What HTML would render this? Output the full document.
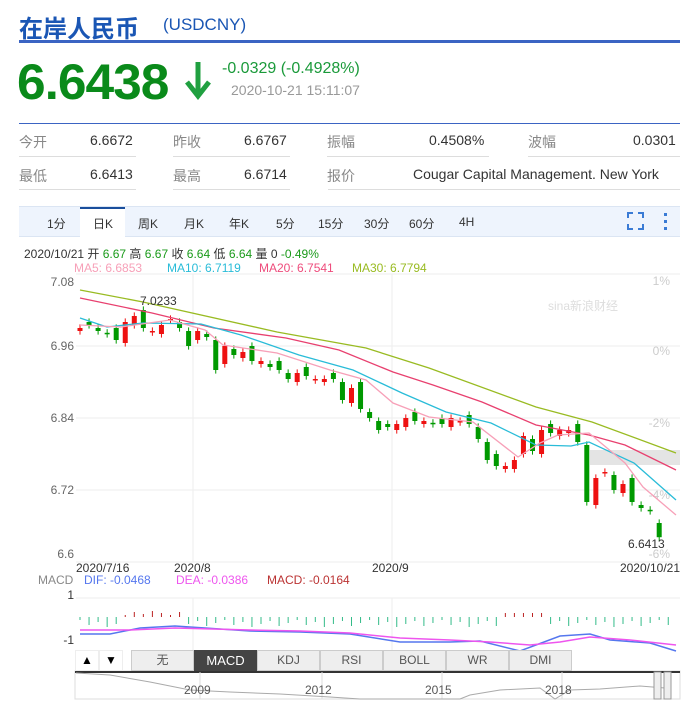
<!DOCTYPE html>
<html><head><meta charset="utf-8">
<style>
*{margin:0;padding:0;box-sizing:border-box}
body{width:689px;height:712px;background:#fff;font-family:"Liberation Sans","Noto Sans CJK SC",sans-serif;position:relative;overflow:hidden;color:#333}
.a{position:absolute;white-space:nowrap}
.lbl{color:#888;font-size:14px}
.val{color:#333;font-size:14px}
.tab{position:absolute;top:215px;font-size:12px;color:#333}
.btn{position:absolute;top:650px;height:21px;background:#eee;border:1px solid #ccc;font-size:12px;color:#555;text-align:center;line-height:19px}
</style></head><body>
<div class="a" style="left:19px;top:9px;font-size:24px;font-weight:bold;color:#1a56b4">在岸人民币</div>
<div class="a" style="left:163px;top:15px;font-size:17px;color:#1a56b4">(USDCNY)</div>
<div class="a" style="left:19px;top:40px;width:661px;height:3px;background:#3b64c3"></div>
<div class="a" style="left:17px;top:53px;font-size:50px;font-weight:bold;color:#0a8a1a;letter-spacing:-1px;transform:scaleX(1.03);transform-origin:left">6.6438</div>
<svg class="a" style="left:184px;top:60px" width="28" height="40"><path d="M14 2V34" stroke="#20a040" stroke-width="5"/><path d="M3 22L14 36L25 22" stroke="#20a040" stroke-width="5" fill="none"/></svg>
<div class="a" style="left:222px;top:60px;font-size:16px;color:#1a9a3a">-0.0329 (-0.4928%)</div>
<div class="a" style="left:231px;top:82px;font-size:14px;color:#999">2020-10-21 15:11:07</div>
<div class="a" style="left:19px;top:123px;width:661px;height:1px;background:#3b64c3"></div>
<div class="a lbl" style="left:19px;top:132px">今开</div><div class="a val" style="left:90px;top:132px">6.6672</div>
<div class="a lbl" style="left:173px;top:132px">昨收</div><div class="a val" style="left:244px;top:132px">6.6767</div>
<div class="a lbl" style="left:327px;top:132px">振幅</div><div class="a val" style="left:429px;top:132px">0.4508%</div>
<div class="a lbl" style="left:528px;top:132px">波幅</div><div class="a val" style="left:633px;top:132px">0.0301</div>
<div class="a lbl" style="left:19px;top:166px">最低</div><div class="a val" style="left:90px;top:166px">6.6413</div>
<div class="a lbl" style="left:173px;top:166px">最高</div><div class="a val" style="left:244px;top:166px">6.6714</div>
<div class="a lbl" style="left:327px;top:166px">报价</div><div class="a val" style="left:413px;top:166px">Cougar Capital Management. New York</div>
<div class="a" style="left:19px;top:156px;width:117px;height:1px;background:#ddd"></div>
<div class="a" style="left:173px;top:156px;width:117px;height:1px;background:#ddd"></div>
<div class="a" style="left:327px;top:156px;width:162px;height:1px;background:#ddd"></div>
<div class="a" style="left:528px;top:156px;width:152px;height:1px;background:#ddd"></div>
<div class="a" style="left:19px;top:189px;width:117px;height:1px;background:#ddd"></div>
<div class="a" style="left:173px;top:189px;width:117px;height:1px;background:#ddd"></div>
<div class="a" style="left:328px;top:189px;width:352px;height:1px;background:#ddd"></div>
<div class="a" style="left:19px;top:206px;width:661px;height:31px;background:#eef4fd;border-top:1px solid #dbe5f3;border-bottom:1px solid #dbe5f3"></div>
<div class="a" style="left:80px;top:207px;width:45px;height:30px;background:#fff;border-top:2px solid #1a4e9c"></div>
<div class="tab" style="left:47px">1分</div><div class="tab" style="left:93px">日K</div><div class="tab" style="left:138px">周K</div><div class="tab" style="left:184px">月K</div><div class="tab" style="left:229px">年K</div><div class="tab" style="left:276px">5分</div><div class="tab" style="left:318px">15分</div><div class="tab" style="left:364px">30分</div><div class="tab" style="left:409px">60分</div><div class="tab" style="left:459px">4H</div>
<svg class="a" style="left:627px;top:212px" width="50" height="20"><path d="M1 6V1H6M11 1H16V6M16 12V17H11M6 17H1V12" stroke="#3a7bd5" stroke-width="2" fill="none"/><rect x="37" y="1" width="3" height="3" fill="#3a7bd5"/><rect x="37" y="8" width="3" height="3" fill="#3a7bd5"/><rect x="37" y="15" width="3" height="3" fill="#3a7bd5"/></svg>
<div class="a" style="left:24px;top:245px;font-size:12px;color:#333">2020/10/21 开 <span style="color:#1a9a1a">6.67</span> 高 <span style="color:#1a9a1a">6.67</span> 收 <span style="color:#1a9a1a">6.64</span> 低 <span style="color:#1a9a1a">6.64</span> 量 0 <span style="color:#1a9a1a">-0.49%</span></div>
<div class="a" style="left:74px;top:261px;font-size:12px;color:#f7a0b8">MA5: 6.6853</div>
<div class="a" style="left:167px;top:261px;font-size:12px;color:#29bcd8">MA10: 6.7119</div>
<div class="a" style="left:259px;top:261px;font-size:12px;color:#ee4c7c">MA20: 6.7541</div>
<div class="a" style="left:352px;top:261px;font-size:12px;color:#99bb22">MA30: 6.7794</div>
<svg id="c" class="a" style="left:0;top:0" width="689" height="712"></svg>
<div class="btn" style="left:75px;width:24px;background:#fff;border-color:#eee;color:#000">▲</div>
<div class="btn" style="left:99px;width:24px;background:#fff;border-color:#eee;color:#000">▼</div>
<div class="btn" style="left:131px;width:63px">无</div>
<div class="btn" style="left:194px;width:63px;background:#444;color:#fff;border-color:#444;font-size:13px">MACD</div>
<div class="btn" style="left:257px;width:63px">KDJ</div>
<div class="btn" style="left:320px;width:63px">RSI</div>
<div class="btn" style="left:383px;width:63px">BOLL</div>
<div class="btn" style="left:446px;width:63px">WR</div>
<div class="btn" style="left:509px;width:63px">DMI</div>
<script>
var s=document.getElementById('c'),h='';
function L(x1,y1,x2,y2,c,w){h+='<line x1="'+x1+'" y1="'+y1+'" x2="'+x2+'" y2="'+y2+'" stroke="'+c+'" stroke-width="'+(w||1)+'"/>';}
function T(x,y,t,c,sz,a){h+='<text x="'+x+'" y="'+y+'" fill="'+c+'" font-size="'+(sz||12)+'" font-family="Liberation Sans,Noto Sans CJK SC,sans-serif"'+(a?' text-anchor="'+a+'"':'')+'>'+t+'</text>';}
function P(pts,c,w){h+='<polyline points="'+pts+'" fill="none" stroke="'+c+'" stroke-width="'+(w||1.3)+'"/>';}
function Y(p){return 346+(6.96-p)*600;}
[274,346,418,490,562].forEach(function(y){L(76,y,680,y,'#eee');});
L(193,274,193,562,'#eee');L(392,274,392,562,'#eee');
T(74,286,'7.08','#666',12,'end');T(74,350,'6.96','#666',12,'end');T(74,422,'6.84','#666',12,'end');T(74,494,'6.72','#666',12,'end');T(74,558,'6.6','#666',12,'end');
T(670,285,'1%','#ccc',12,'end');T(670,355,'0%','#ccc',12,'end');T(670,427,'-2%','#ccc',12,'end');T(670,499,'-4%','#ccc',12,'end');T(670,558,'-6%','#ccc',12,'end');
h+='<rect x="590" y="450" width="90" height="15" fill="#e4e4e4"/>';
T(548,310,'sina新浪财经','#ddd',12);
var cl=[6.99,6.995,6.985,6.98,6.97,7.00,7.01,6.99,6.985,6.995,7.005,6.99,
6.96,6.985,6.975,6.92,6.96,6.945,6.95,6.935,6.935,6.925,6.92,6.905,6.915,6.91,6.905,6.905,6.905,6.87,6.89,6.855,6.84,
6.82,6.825,6.83,6.84,6.835,6.835,6.83,6.83,6.84,6.835,6.83,6.805,6.77,6.76,6.76,6.77,6.81,6.785,6.82,6.815,6.82,6.82,
6.80,6.70,6.74,6.75,6.72,6.73,6.70,6.69,6.685,6.6413];
var op=6.985;
for(var i=0;i<cl.length;i++){var x=80+i*9.05,c=cl[i],o=op;if(Math.abs(c-o)<0.002)o=c+0.002*(i%2?1:-1);
var up=c>o,col=up?'#ee1111':'#009900';var hi=Math.max(o,c)+0.006,lo=Math.min(o,c)-0.006;
L(x,Y(hi),x,Y(lo),col);h+='<rect x="'+(x-2.5)+'" y="'+Y(Math.max(o,c))+'" width="5" height="'+Math.max(1.5,Math.abs(o-c)*600)+'" fill="'+col+'"/>';
op=c+(i%3==0?0.01:-0.005);if(i==cl.length-2)op=6.665;}
P('80,290 143,302 277,332 366,348 429,368 536,407 592,422 676,453','#99bb22');
P('80,298 152,313 214,328 286,338 339,350 393,372 433,385 482,402 536,425 589,435 625,445 676,470','#e8406f');
P('80,318 107,327 143,323 201,324 241,335 299,355 353,370 402,393 446,412 491,423 536,445 571,446 589,442 634,463 676,500','#29bcd8');
P('80,325 121,327 170,320 205,330 223,345 277,353 330,370 366,380 393,403 429,417 473,422 518,457 540,443 558,435 589,433 625,463 643,487 676,515','#f7a0b8');
T(140,305,'7.0233','#333',12);T(628,548,'6.6413','#333',12);
T(76,572,'2020/7/16','#333',12);T(174,572,'2020/8','#333',12);T(372,572,'2020/9','#333',12);T(680,572,'2020/10/21','#333',12,'end');
T(38,584,'MACD','#888',12);T(84,584,'DIF: -0.0468','#5577ee',12);T(176,584,'DEA: -0.0386','#ee55ee',12);T(267,584,'MACD: -0.0164','#bb3333',12);
L(76,598,680,598,'#eee');L(193,598,193,676,'#eee');L(392,598,392,676,'#eee');
T(74,599,'1','#333',12,'end');T(74,644,'-1','#333',12,'end');
for(var j=0;j<66;j++){var x=80+j*9.05,v;
if(j>=5&&j<=11)v=2+((j*3)%5);else if(j>=47&&j<=51)v=4+((j*7)%7);else v=-(3+((j*5)%8));
L(x,617,x,617-v,v>0?'#bb2222':'#33bb88');}
P('80,634 110,634 140,628 175,626 205,628 250,631 300,632 350,634 400,642 450,642 480,641 520,651 560,636 590,634 610,640 650,643 676,651','#5577ee',1.5);
P('80,630 130,630 175,628 250,630 300,631 350,633 400,638 450,640 490,642 530,645 560,642 590,637 630,640 676,645','#ee55ee',1.5);
h+='<rect x="75" y="671" width="605" height="28" fill="#fff" stroke="#ddd"/>';L(75,672,680,672,'#333',2);
L(200,672,200,699,'#ddd');L(322,672,322,699,'#ddd');L(442,672,442,699,'#ddd');L(562,672,562,699,'#ddd');
P('76,673 110,675 150,682 190,690 230,692 280,694 330,697 360,699 420,699 460,699 470,695 500,690 540,688 555,699 570,690 600,689 640,686 665,688','#aaa',1);
T(184,694,'2009','#555',12);T(305,694,'2012','#555',12);T(425,694,'2015','#555',12);T(545,694,'2018','#555',12);
h+='<rect x="654" y="672" width="7" height="27" fill="#eee" stroke="#999"/><rect x="664" y="672" width="7" height="27" fill="#eee" stroke="#999"/>';
s.innerHTML=h;
</script>
</body></html>
